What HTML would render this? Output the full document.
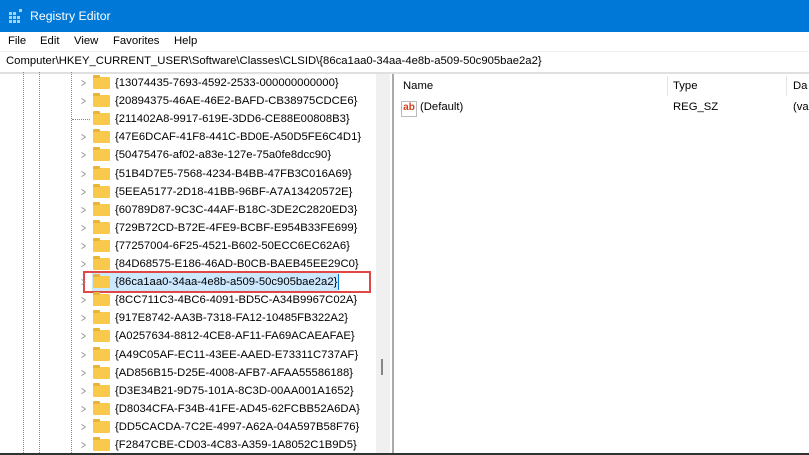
<!DOCTYPE html><html><head><style>
body{margin:0;width:809px;height:455px;overflow:hidden;background:#fff;font-family:"Liberation Sans",sans-serif;font-size:11.3px;color:#000;position:relative}
.a{position:absolute}
.row{position:absolute;left:0;height:18px;line-height:18px;white-space:nowrap}
.fold{position:absolute;left:93px;top:3px;width:17px;height:12px;background:#f8c94a;border-radius:1px}
.fold:before{content:"";position:absolute;left:0;top:-2px;width:7px;height:3px;background:#e8b53a;border-radius:1px 1px 0 0}
.chev{position:absolute;left:80px;top:0;color:#888;font-size:12px;transform:scaleX(.7)}
.t{position:absolute;left:115px;top:0}
.vd{position:absolute;top:72px;height:383px;border-left:1px dotted #888}
</style></head><body>
<div class="a" style="left:0;top:0;width:809px;height:32px;background:#0078d7"></div>
<svg class="a" style="left:9px;top:9px" width="14" height="14"><g fill="#a7d3f3"><rect x="0" y="3" width="3" height="3"/><rect x="4" y="3" width="3" height="3"/><rect x="0" y="7" width="3" height="3"/><rect x="4" y="7" width="3" height="3"/><rect x="8" y="7" width="3" height="3"/><rect x="0" y="11" width="3" height="3"/><rect x="4" y="11" width="3" height="3"/><rect x="8" y="11" width="3" height="3"/><rect x="10" y="0" width="3" height="3"/></g></svg>
<div class="a" style="left:30px;top:9px;color:#fff;font-size:12.3px">Registry Editor</div>
<div class="a" style="left:8px;top:35px">File</div>
<div class="a" style="left:40px;top:35px">Edit</div>
<div class="a" style="left:74px;top:35px">View</div>
<div class="a" style="left:113px;top:35px">Favorites</div>
<div class="a" style="left:174px;top:35px">Help</div>
<div class="a" style="left:0;top:51px;width:809px;height:1px;background:#f0f0f0"></div>
<div class="a" style="left:6px;top:55px">Computer\HKEY_CURRENT_USER\Software\Classes\CLSID\{86ca1aa0-34aa-4e8b-a509-50c905bae2a2}</div>
<div class="a" style="left:0;top:72px;width:809px;height:2px;background:#e0e0e0"></div>
<div class="vd" style="left:23px"></div><div class="vd" style="left:39px"></div><div class="vd" style="left:71px"></div>
<div class="a" style="left:376px;top:74px;width:14px;height:381px;background:#f0f0f0"></div>
<div class="a" style="left:381px;top:359px;width:2px;height:16px;background:#888"></div>
<div class="a" style="left:392px;top:74px;width:2px;height:381px;background:#aaa"></div>
<div class="a" style="left:0;top:453px;width:809px;height:2px;background:#333"></div>
<div class="a" style="left:403px;top:80px">Name</div>
<div class="a" style="left:667px;top:76px;width:1px;height:20px;background:#e5e5e5"></div>
<div class="a" style="left:673px;top:80px">Type</div>
<div class="a" style="left:786px;top:76px;width:1px;height:20px;background:#e5e5e5"></div>
<div class="a" style="left:793px;top:80px">Da</div>
<div class="a" style="left:401px;top:101px;width:14px;height:14px;border:1px solid #bbb;background:#fff;color:#d04020;font-weight:bold;font-size:10px;line-height:12px;text-align:center">ab</div>
<div class="a" style="left:420px;top:101px">(Default)</div>
<div class="a" style="left:673px;top:101px">REG_SZ</div>
<div class="a" style="left:793px;top:101px">(va</div>
<div class="a" style="left:92px;top:273px;width:246px;height:18px;background:#cce8ff"></div>
<div class="a" style="left:338px;top:274px;width:1px;height:16px;background:#0078d7"></div>
<div class="a" style="left:83px;top:271px;width:284px;height:18px;border:2px solid #e04848"></div>
<div id="tree"></div>
<script>
var L=["{13074435-7693-4592-2533-000000000000}","{20894375-46AE-46E2-BAFD-CB38975CDCE6}","{211402A8-9917-619E-3DD6-CE88E00808B3}","{47E6DCAF-41F8-441C-BD0E-A50D5FE6C4D1}","{50475476-af02-a83e-127e-75a0fe8dcc90}","{51B4D7E5-7568-4234-B4BB-47FB3C016A69}","{5EEA5177-2D18-41BB-96BF-A7A13420572E}","{60789D87-9C3C-44AF-B18C-3DE2C2820ED3}","{729B72CD-B72E-4FE9-BCBF-E954B33FE699}","{77257004-6F25-4521-B602-50ECC6EC62A6}","{84D68575-E186-46AD-B0CB-BAEB45EE29C0}","{86ca1aa0-34aa-4e8b-a509-50c905bae2a2}","{8CC711C3-4BC6-4091-BD5C-A34B9967C02A}","{917E8742-AA3B-7318-FA12-10485FB322A2}","{A0257634-8812-4CE8-AF11-FA69ACAEAFAE}","{A49C05AF-EC11-43EE-AAED-E73311C737AF}","{AD856B15-D25E-4008-AFB7-AFAA55586188}","{D3E34B21-9D75-101A-8C3D-00AA001A1652}","{D8034CFA-F34B-41FE-AD45-62FCBB52A6DA}","{DD5CACDA-7C2E-4997-A62A-04A597B58F76}","{F2847CBE-CD03-4C83-A359-1A8052C1B9D5}"];
var h="";L.forEach(function(s,i){var y=74+i*18.1;h+='<div class="row" style="top:'+y+'px;width:370px">'+(i==2?'<div class="a" style="left:72px;top:9px;width:18px;border-top:1px dotted #888"></div>':'<div class="chev">&gt;</div>')+'<div class="fold"></div><div class="t">'+s+'</div></div>'});
document.getElementById("tree").innerHTML=h;
</script>
</body></html>
